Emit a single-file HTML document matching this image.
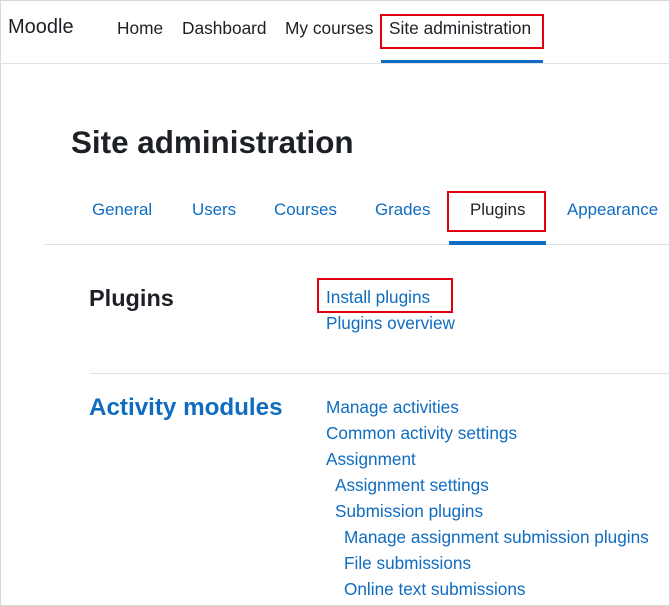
<!DOCTYPE html>
<html><head><style>
*{margin:0;padding:0;box-sizing:border-box}
body{width:670px;height:606px;background:#fff;font-family:"Liberation Sans",sans-serif;position:relative;overflow:hidden}
.a{position:absolute;white-space:nowrap}
.n{font-size:17.3px;color:#1d2125;top:18px}
.t{font-size:16.9px;color:#0f6cbf;top:200px}
.l{font-size:17.2px;color:#0f6cbf}
.r{position:absolute;border:2px solid #e0000f}
</style></head><body>
<div class="a" style="left:0;top:0;width:670px;height:606px;border:1px solid #d8d8d8"></div>
<div class="a" style="left:0;top:63px;width:670px;height:1px;background:#dee2e6"></div>
<div class="a n" style="left:8px;font-size:20px;top:16px">Moodle</div>
<div class="a n" style="left:117px">Home</div>
<div class="a n" style="left:182px">Dashboard</div>
<div class="a n" style="left:285px">My courses</div>
<div class="a n" style="left:389px">Site administration</div>
<div class="r" style="left:380px;top:14px;width:164px;height:35px"></div>
<div class="a" style="left:381px;top:60px;width:162px;height:3px;background:#0f6cbf"></div>
<div class="a" style="left:71px;top:125px;font-size:31.4px;font-weight:bold;color:#1d2125">Site administration</div>
<div class="a t" style="left:92px">General</div>
<div class="a t" style="left:192px">Users</div>
<div class="a t" style="left:274px">Courses</div>
<div class="a t" style="left:375px">Grades</div>
<div class="a t" style="left:470px;color:#1d2125">Plugins</div>
<div class="a t" style="left:567px">Appearance</div>
<div class="r" style="left:447px;top:191px;width:99px;height:41px"></div>
<div class="a" style="left:45px;top:244px;width:625px;height:1px;background:#dee2e6"></div>
<div class="a" style="left:449px;top:241px;width:97px;height:4px;background:#0f6cbf"></div>
<div class="a" style="left:89px;top:285px;font-size:23.5px;font-weight:bold;color:#1d2125">Plugins</div>
<div class="a l" style="left:326px;top:287px">Install plugins</div>
<div class="r" style="left:317px;top:278px;width:136px;height:35px"></div>
<div class="a l" style="left:326px;top:313px">Plugins overview</div>
<div class="a" style="left:90px;top:373px;width:580px;height:1px;background:#dee2e6"></div>
<div class="a" style="left:89px;top:394px;font-size:24.2px;font-weight:bold;color:#0f6cbf">Activity modules</div>
<div class="a l" style="left:326px;top:397px">Manage activities</div>
<div class="a l" style="left:326px;top:423px">Common activity settings</div>
<div class="a l" style="left:326px;top:449px">Assignment</div>
<div class="a l" style="left:335px;top:475px">Assignment settings</div>
<div class="a l" style="left:335px;top:501px">Submission plugins</div>
<div class="a l" style="left:344px;top:527px">Manage assignment submission plugins</div>
<div class="a l" style="left:344px;top:553px">File submissions</div>
<div class="a l" style="left:344px;top:579px">Online text submissions</div>
</body></html>
